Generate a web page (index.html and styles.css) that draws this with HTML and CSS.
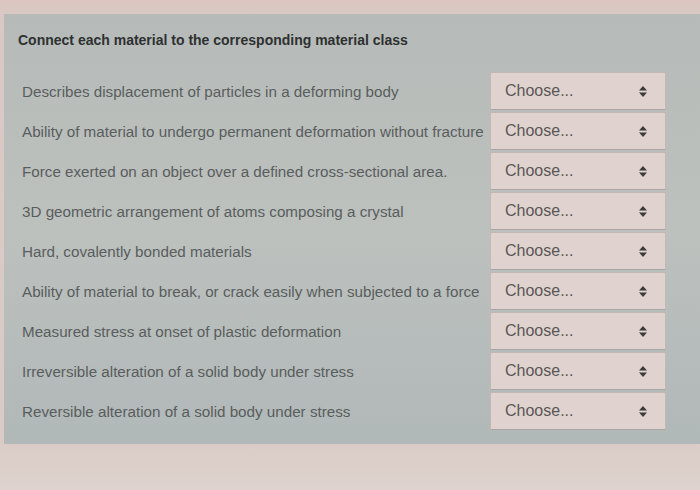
FILE: index.html
```html
<!DOCTYPE html>
<html>
<head>
<meta charset="utf-8">
<link rel="stylesheet" href="styles.css">
</head>
<body>
<div class="panel">
  <div class="title">Connect each material to the corresponding material class</div>
  <div class="rows">
    <div class="row"><span class="label">Describes displacement of particles in a deforming body</span><div class="select"><span>Choose...</span><svg class="arrows" width="8" height="11" viewBox="0 0 8 11"><path d="M4 0L8 4.5H0Z M4 11L8 6.5H0Z" fill="#3a3a3a"/></svg></div></div>
    <div class="row"><span class="label">Ability of material to undergo permanent deformation without fracture</span><div class="select"><span>Choose...</span><svg class="arrows" width="8" height="11" viewBox="0 0 8 11"><path d="M4 0L8 4.5H0Z M4 11L8 6.5H0Z" fill="#3a3a3a"/></svg></div></div>
    <div class="row"><span class="label">Force exerted on an object over a defined cross-sectional area.</span><div class="select"><span>Choose...</span><svg class="arrows" width="8" height="11" viewBox="0 0 8 11"><path d="M4 0L8 4.5H0Z M4 11L8 6.5H0Z" fill="#3a3a3a"/></svg></div></div>
    <div class="row"><span class="label">3D geometric arrangement of atoms composing a crystal</span><div class="select"><span>Choose...</span><svg class="arrows" width="8" height="11" viewBox="0 0 8 11"><path d="M4 0L8 4.5H0Z M4 11L8 6.5H0Z" fill="#3a3a3a"/></svg></div></div>
    <div class="row"><span class="label">Hard, covalently bonded materials</span><div class="select"><span>Choose...</span><svg class="arrows" width="8" height="11" viewBox="0 0 8 11"><path d="M4 0L8 4.5H0Z M4 11L8 6.5H0Z" fill="#3a3a3a"/></svg></div></div>
    <div class="row"><span class="label">Ability of material to break, or crack easily when subjected to a force</span><div class="select"><span>Choose...</span><svg class="arrows" width="8" height="11" viewBox="0 0 8 11"><path d="M4 0L8 4.5H0Z M4 11L8 6.5H0Z" fill="#3a3a3a"/></svg></div></div>
    <div class="row"><span class="label">Measured stress at onset of plastic deformation</span><div class="select"><span>Choose...</span><svg class="arrows" width="8" height="11" viewBox="0 0 8 11"><path d="M4 0L8 4.5H0Z M4 11L8 6.5H0Z" fill="#3a3a3a"/></svg></div></div>
    <div class="row"><span class="label">Irreversible alteration of a solid body under stress</span><div class="select"><span>Choose...</span><svg class="arrows" width="8" height="11" viewBox="0 0 8 11"><path d="M4 0L8 4.5H0Z M4 11L8 6.5H0Z" fill="#3a3a3a"/></svg></div></div>
    <div class="row"><span class="label">Reversible alteration of a solid body under stress</span><div class="select"><span>Choose...</span><svg class="arrows" width="8" height="11" viewBox="0 0 8 11"><path d="M4 0L8 4.5H0Z M4 11L8 6.5H0Z" fill="#3a3a3a"/></svg></div></div>
  </div>
</div>
</body>
</html>
```
FILE: styles.css
```css
html, body {
  margin: 0;
  padding: 0;
}
body {
  width: 700px;
  height: 490px;
  overflow: hidden;
  background: linear-gradient(180deg, #dcc6c2 0px, #d9c8c3 14px, #dacbc6 440px, #ded3ce 490px);
  font-family: "Liberation Sans", Arial, sans-serif;
}
.panel {
  margin: 14px 0 0 4px;
  height: 430px;
  box-sizing: border-box;
  padding: 17px 0 14px 14px;
  background: linear-gradient(180deg, #b6bbb9 0%, #bcc1be 50%, #b1b8b8 100%);
}
.title {
  font-size: 14px;
  font-weight: bold;
  line-height: 18px;
  color: #2e3031;
}
.rows {
  margin-top: 23px;
  display: flex;
  flex-direction: column;
  gap: 2px;
}
.row {
  display: flex;
  align-items: center;
  height: 38px;
}
.label {
  width: 472px;
  padding-left: 4px;
  box-sizing: border-box;
  font-size: 15.2px;
  color: #5a5d5d;
  white-space: nowrap;
}
.select {
  width: 176px;
  height: 38px;
  box-sizing: border-box;
  display: flex;
  align-items: center;
  justify-content: space-between;
  padding: 0 18px 0 14px;
  background: #e0d3cf;
  border: 1px solid #c2b8b4;
  border-bottom-color: #a9a6a4;
  font-size: 16px;
  color: #5a5655;
}
.arrows {
  display: block;
}
```
